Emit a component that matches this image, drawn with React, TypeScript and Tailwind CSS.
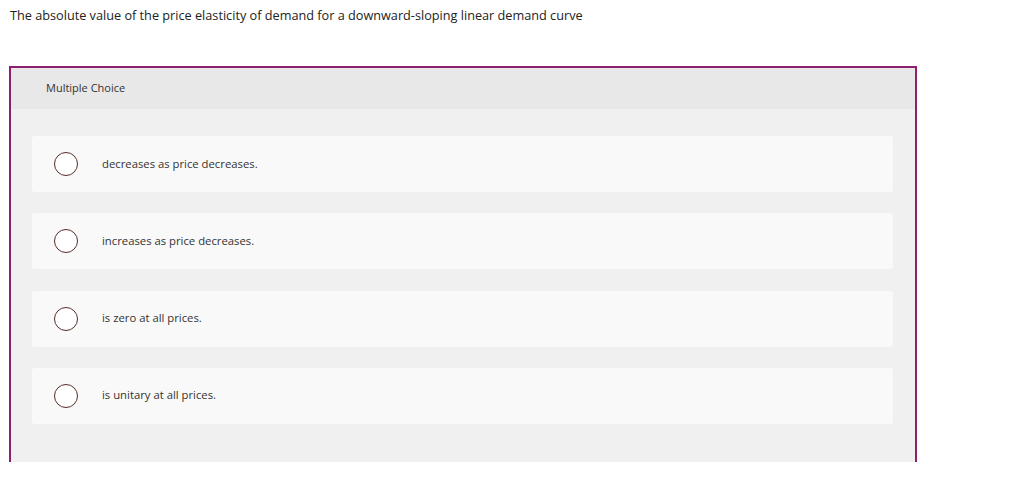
import React from 'react';

const options = [
  'decreases as price decreases.',
  'increases as price decreases.',
  'is zero at all prices.',
  'is unitary at all prices.',
];

export default function App() {
  return (
    <div className="w-[1024px] h-[477px] bg-white font-['Open_Sans',sans-serif] text-[#222]">
      <p className="pl-[10px] pt-[7px] text-[12.7px] leading-[16px]">
        The absolute value of the price elasticity of demand for a downward-sloping linear demand curve
      </p>
      <div className="ml-[9px] mt-[43px] w-[908px] h-[396px] border-t-2 border-l-2 border-r-2 border-[#8c1f6e] bg-[#f0f0f0]">
        <div className="h-[41px] bg-[#e8e8e8] pl-[35px] pt-[13px] text-[11px] leading-[14px] text-[#333]">
          Multiple Choice
        </div>
        <div className="flex flex-col gap-[21.3px] pl-[21px] pr-[22px] pt-[27px]">
          {options.map((opt) => (
            <div key={opt} className="flex h-[56px] items-center rounded-[3px] bg-[#f9f9f9] pl-[22px]">
              <span className="h-[24px] w-[24px] rounded-full border border-[#5a2a2a] bg-white" />
              <span className="ml-[24px] text-[11.3px] text-[#333]">{opt}</span>
            </div>
          ))}
        </div>
      </div>
    </div>
  );
}
